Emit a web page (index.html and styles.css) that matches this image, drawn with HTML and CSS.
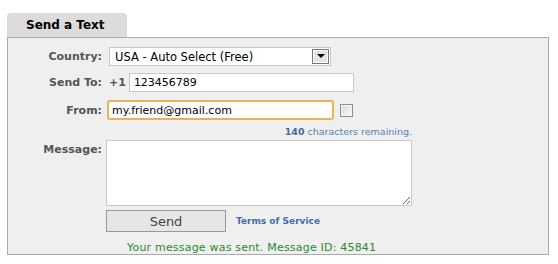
FILE: index.html
```html
<!DOCTYPE html>
<html lang="en">
<head>
  <meta charset="UTF-8">
  <title>Send a Text</title>
  <link rel="stylesheet" href="styles.css">
</head>
<body>
  <div class="wrap">
    <div class="tab">Send a Text</div>

    <form class="panel" id="sms-form">
      <div class="row">
        <label class="label">Country:</label>
        <div class="select">
          <span>USA - Auto Select (Free)</span>
          <span class="arrow"><svg width="8" height="5" viewBox="0 0 8 5"><path d="M0 0h8L4 4z" fill="#000"/></svg></span>
        </div>
      </div>

      <div class="row row-to">
        <label class="label">Send To:</label>
        <span class="prefix">+1</span>
        <input type="text" class="field field-to" value="123456789">
      </div>

      <div class="row">
        <label class="label">From:</label>
        <input type="text" class="field field-from" value="my.friend@gmail.com">
        <span class="check"></span>
      </div>

      <div class="chars"><b>140</b> characters remaining.</div>

      <div class="row row-msg">
        <label class="label">Message:</label>
        <textarea class="message"></textarea>
      </div>

      <div class="row row-send">
        <button type="submit" class="send">Send</button>
        <a class="tos" href="#">Terms of Service</a>
      </div>

      <div class="status">Your message was sent. Message ID: 45841</div>
    </form>
  </div>
</body>
</html>
```

FILE: styles.css
```css
body {
  margin: 0;
  font-family: "DejaVu Sans", Verdana, sans-serif;
  background: #fff;
}

.wrap {
  padding: 13px 0 0 7px;
  width: 542px;
}

.tab {
  width: 120px;
  height: 24px;
  box-sizing: border-box;
  padding-left: 19px;
  line-height: 25px;
  background: #dcdcdc;
  border-radius: 4px 4px 0 0;
  font-size: 12px;
  font-weight: bold;
  color: #000;
}

.panel {
  display: flex;
  flex-direction: column;
  width: 542px;
  height: 218px;
  box-sizing: border-box;
  margin: 0;
  padding-top: 9px;
  background: #efefef;
  border: 1px solid #aaa;
}

.row {
  display: flex;
  align-items: center;
}

.label {
  width: 94px;
  flex: none;
  text-align: right;
  font-size: 11px;
  font-weight: bold;
  color: #555;
}

.select {
  display: flex;
  align-items: center;
  justify-content: space-between;
  margin-left: 7px;
  width: 222px;
  height: 19px;
  box-sizing: border-box;
  padding: 0 1px 0 5px;
  background: #fff;
  border: 1px solid #c8c8c8;
  font-size: 11.5px;
  color: #000;
}

.arrow {
  display: flex;
  align-items: center;
  justify-content: center;
  width: 17px;
  height: 15px;
  box-sizing: border-box;
  border: 1px solid #777;
  box-shadow: inset 0 0 0 1px #fff;
  background: #e4e4e4;
}

.row-to {
  margin-top: 7px;
}

.prefix {
  margin-left: 7px;
  font-size: 11px;
  font-weight: bold;
  color: #555;
}

.field {
  height: 19px;
  box-sizing: border-box;
  padding: 0 4px;
  background: #fff;
  border: 1px solid #c8c8c8;
  font-family: inherit;
  font-size: 11px;
  color: #000;
  outline: none;
}

.field-to {
  margin-left: 3px;
  width: 225px;
}

.row:nth-child(3) {
  margin-top: 8px;
}

.field-from {
  margin-left: 5px;
  width: 227px;
  height: 20px;
  border: 2px solid #e6b456;
  border-radius: 3px;
  padding: 0 3px;
}

.check {
  margin-left: 6px;
  width: 13px;
  height: 13px;
  box-sizing: border-box;
  border: 1px solid #8e8e8e;
  box-shadow: inset 0 0 0 1px #f4f4f4;
  background: linear-gradient(135deg, #d8d8d8, #fbfbfb);
}

.chars {
  width: 404px;
  margin-top: 6px;
  text-align: right;
  font-size: 9.5px;
  color: #5383b8;
}

.chars b {
  color: #3f6d9e;
}

.row-msg {
  margin-top: 3px;
  align-items: flex-start;
}

.row-msg .label {
  padding-top: 3px;
}

.message {
  margin: 0 0 0 4px;
  width: 306px;
  height: 66px;
  box-sizing: border-box;
  background: #fff;
  border: 1px solid #c8c8c8;
  resize: both;
}

.row-send {
  margin-top: 4px;
  padding-left: 98px;
}

.send {
  width: 120px;
  height: 22px;
  padding: 0;
  background: #e6e6e6;
  border: 1px solid #999;
  font-family: inherit;
  font-size: 13px;
  color: #444;
}

.tos {
  margin-left: 10px;
  font-size: 9px;
  font-weight: bold;
  color: #3e6fa8;
  text-decoration: none;
}

.status {
  margin-top: 9px;
  padding-left: 119px;
  font-size: 11px;
  letter-spacing: 0.2px;
  color: #2b8a2b;
}
```
